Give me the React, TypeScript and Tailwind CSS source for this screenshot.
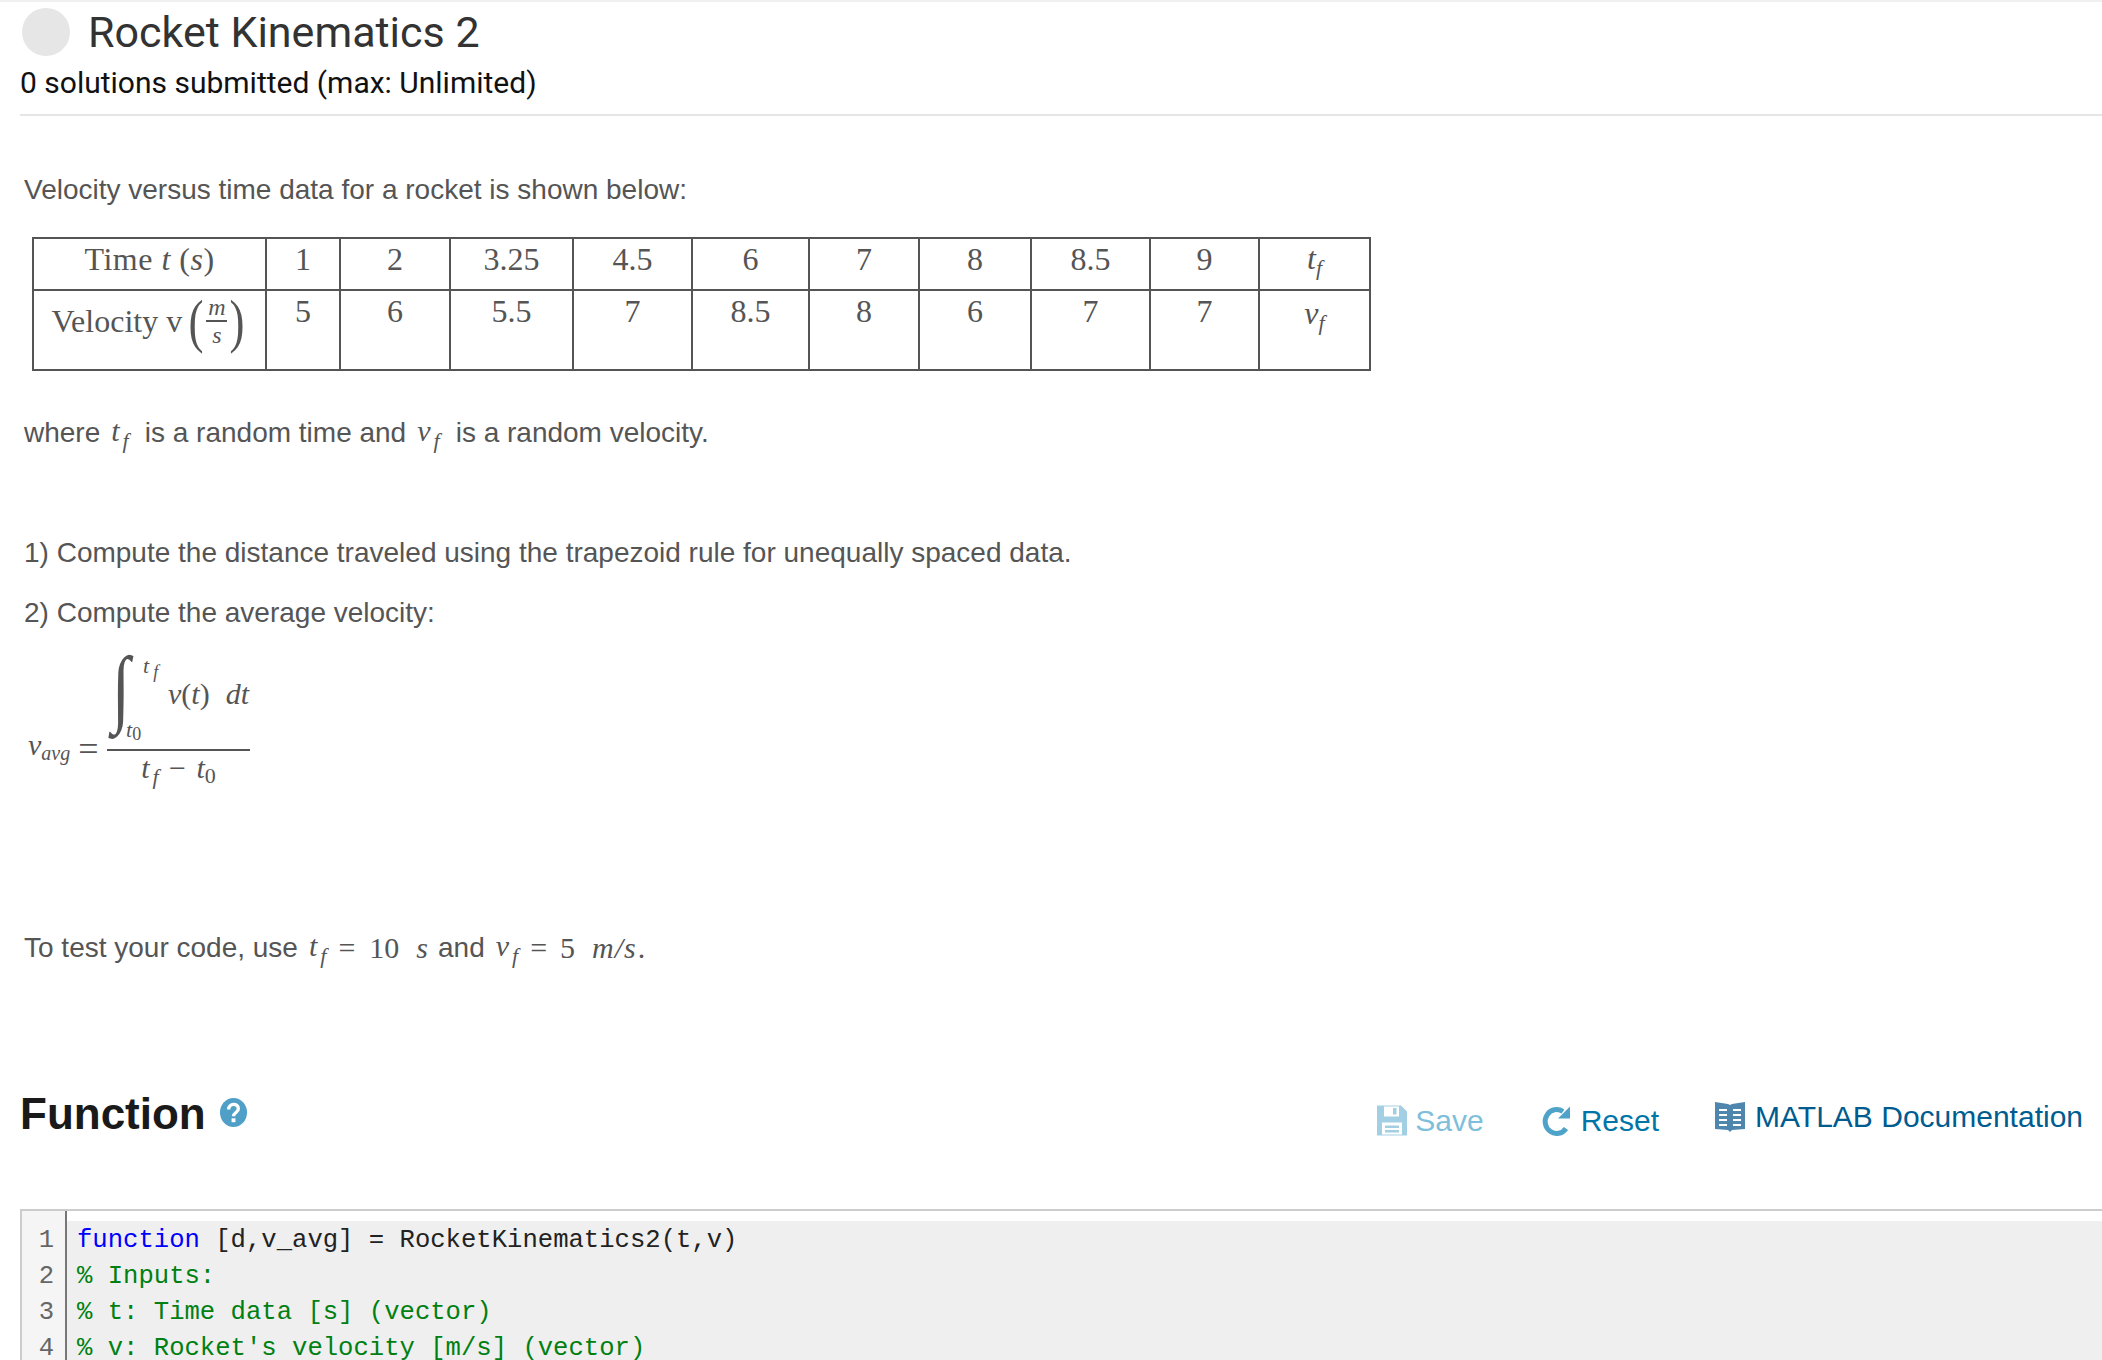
import React from "react";

const sans = "font-['Liberation_Sans',Arial,sans-serif]";
const serif = "font-['Liberation_Serif','Times_New_Roman',serif]";

const colWidths = [233, 74, 110, 123, 119, 117, 110, 112, 119, 109, 111];
const topRow = ["1", "2", "3.25", "4.5", "6", "7", "8", "8.5", "9"];
const bottomRow = ["5", "6", "5.5", "7", "8.5", "8", "6", "7", "7"];

const codeLines = [
  { text: "", fn: true },
  { text: "% Inputs:" },
  { text: "% t: Time data [s] (vector)" },
  { text: "% v: Rocket's velocity [m/s] (vector)" },
];

const Sub = ({ base }: { base: string }) => (
  <span className={`${serif} italic text-[30px] text-[#555] ml-[11px] mr-[16px] whitespace-nowrap`}>
    {base}
    <span className="text-[22px] relative top-[7px] ml-[3px]">f</span>
  </span>
);

const SaveIcon = () => (
  <svg viewBox="0 0 30 30" className="w-[30px] h-[31px]">
    <path
      fill="#a3cfe4"
      fillRule="evenodd"
      d="M0 0h24l6 6v24H0zM7 1v10h15V1zM16 2.500h3.500v6.500H16zM5 17v12h20V17zM8 20h14v2.500H8zM8 24.500h14V27H8z"
    />
  </svg>
);

const ResetIcon = () => (
  <svg viewBox="0 0 30 30" className="w-[30px] h-[33px]">
    <path d="M25 23A11.500 12 0 1 1 22 6" fill="none" stroke="#4fa3c9" strokeWidth="5" />
    <path d="M29 1v12H17z" fill="#4fa3c9" />
  </svg>
);

const BookIcon = () => (
  <svg viewBox="0 0 30 30" className="w-[30px] h-[30px]">
    <path fill="#4f86ae" d="M0 0l13 2 2 1 2-1 13-2v27l-13 1-2 2-2-2-13-1z" />
    <path
      stroke="#fff"
      strokeWidth="2"
      d="M4 8h8M4 13h8M4 18h8M4 23h8M18 8h8M18 13h8M18 18h8M18 23h8"
    />
  </svg>
);

const HelpIcon = () => (
  <svg viewBox="0 0 28 30" className="w-[29px] h-[29px]">
    <ellipse cx="14" cy="15" rx="14" ry="15" fill="#4f9fc7" />
    <path d="M9 12c0-7 10-7 10-1 0 4-5 4-5 8" fill="none" stroke="#fff" strokeWidth="3.500" />
    <rect x="12" y="21" width="4" height="4" fill="#fff" />
  </svg>
);

const Formula = () => (
  <div className={`${serif} mt-[17px] ml-[4px] h-[131px] flex items-end text-[#555] text-[30px]`}>
    <div className="italic mb-[13px] whitespace-nowrap w-[79px] shrink-0">
      v<span className="text-[20px] relative top-[5px]">avg</span>
      <span className="not-italic text-[36px] ml-2 leading-none relative top-[6px]">=</span>
    </div>
    <div className="w-[143px] flex flex-col">
      <div className="h-[103px] border-b-2 border-[#555] flex relative">
        <span className="text-[66px] font-light leading-none italic absolute left-[5px] top-[6px] scale-y-[1.3]">∫</span>
        <span className="italic text-[22px] absolute left-[36px] top-0">t<span className="text-[18px] relative top-[5px] ml-1">f</span></span>
        <span className="italic text-[22px] absolute left-[19px] top-[64px]">t<span className="not-italic text-[18px] relative top-[3px]">0</span></span>
        <span className="absolute left-[61px] top-[28px] whitespace-nowrap">
          <i>v</i>(<i>t</i>)<i className="ml-4">dt</i>
        </span>
      </div>
      <div className="h-[28px] text-center whitespace-nowrap leading-[33px]">
        <i>t</i><i className="text-[22px] relative top-[6px] ml-[3px]">f</i> <span className="mx-[3px]">−</span> <i>t</i><span className="text-[22px] relative top-[5px]">0</span>
      </div>
    </div>
  </div>
);

const App = () => {
  return (
    <div className={`${sans} w-[2102px] h-[1360px] overflow-hidden bg-white border-t-2 border-[#f0f0f0]`}>
      {/* header */}
      <div className="pl-5">
        <div className="flex items-center h-[60px]">
          <div className="w-12 h-12 rounded-full bg-[#e6e6e6] shrink-0 ml-[2px]" />
          <h1 className="font-['Roboto',sans-serif] text-[43px] text-[#333] ml-[18px]">Rocket Kinematics 2</h1>
        </div>
        <p className="font-['Roboto',sans-serif] text-[30px] leading-[36px] text-[#111] h-[51px] mt-[3px] border-b-2 border-[#e6e6e6]">
          0 solutions submitted (max: Unlimited)
        </p>
      </div>

      {/* statement */}
      <div className="px-6 text-[28px] text-[#555] leading-[36px]">
        <p className="mt-[56px]">Velocity versus time data for a rocket is shown below:</p>

        <table className={`${serif} mt-[29px] ml-2 table-fixed border-collapse border-2 border-[#555] text-[32px]`}>
          <colgroup>
            {colWidths.map((w, i) => (
              <col key={i} style={{ width: w }} />
            ))}
          </colgroup>
          <tbody>
            <tr className="h-[52px]">
              <td className="border-2 border-[#555] text-center pb-[10px] tracking-[0.5px]">
                Time <i>t</i> (<i>s</i>)
              </td>
              {topRow.map((v, i) => (
                <td key={i} className="border-2 border-[#555] text-center pb-[10px]">{v}</td>
              ))}
              <td className="border-2 border-[#555] text-center italic pb-[8px]">
                t<span className="text-[22px] relative top-[6px]">f</span>
              </td>
            </tr>
            <tr className="h-[80px]">
              <td className="border-2 border-[#555] text-center align-top pt-0 whitespace-nowrap">
                <span className="inline-flex items-center justify-center">
                  Velocity v
                  <span className="text-[60px] font-light leading-none ml-1 scale-x-75">(</span>
                  <span className="inline-flex flex-col items-center text-[24px] leading-[26px] italic">
                    <span className="border-b-2 border-[#555] px-0.5">m</span>
                    <span>s</span>
                  </span>
                  <span className="text-[60px] font-light leading-none scale-x-75">)</span>
                </span>
              </td>
              {bottomRow.map((v, i) => (
                <td key={i} className="border-2 border-[#555] text-center align-top pt-[2px]">{v}</td>
              ))}
              <td className="border-2 border-[#555] text-center align-top pt-1 italic">
                v<span className="text-[22px] relative top-[6px]">f</span>
              </td>
            </tr>
          </tbody>
        </table>

        <p className="mt-[42px] flex items-center">
          where <Sub base="t" /> is a random time and <Sub base="v" /> is a random velocity.
        </p>
        <p className="mt-[83px]">1) Compute the distance traveled using the trapezoid rule for unequally spaced data.</p>
        <p className="mt-[24px]">2) Compute the average velocity:</p>
        <Formula />
        <p className="mt-[149px] flex items-center">
          To test your code, use <Sub base="t" />
          <span className={`${serif} text-[30px] -ml-[4px]`}>=</span>
          <span className={`${serif} text-[30px] ml-[14px]`}>10</span>
          <i className={`${serif} text-[30px] ml-[17px] mr-[10px]`}>s</i>
          and <Sub base="v" />
          <span className={`${serif} text-[30px] -ml-[4px]`}>=</span>
          <span className={`${serif} text-[30px] ml-[13px]`}>5</span>
          <i className={`${serif} text-[30px] ml-[17px] tracking-[1px]`}>m/s</i>
          <span className={`${serif} text-[30px] ml-[1px]`}>.</span>
        </p>
      </div>

      {/* function toolbar */}
      <div className="mt-[123px] h-[60px] flex items-start justify-between pl-5 pr-5">
        <div className="flex items-center h-[48px]">
          <h2 className="text-[44px] font-bold text-[#1a1a1a]">Function</h2>
          <span className="ml-[13px] -mt-1"><HelpIcon /></span>
        </div>
        <div className="flex items-start text-[30px]">
          <a className="flex items-center gap-2 mt-[8px] text-[#7fbfdb]">
            <SaveIcon />
            Save
          </a>
          <a className="flex items-center gap-2.5 mt-[8px] ml-[57px] text-[#0076a8]">
            <ResetIcon />
            Reset
          </a>
          <a className="flex items-center gap-2.5 mt-[4px] ml-[56px] mr-[-1px] text-[#005c8f]">
            <BookIcon />
            MATLAB Documentation
          </a>
        </div>
      </div>

      {/* code */}
      <div className="mt-[59px] ml-5 border-t-2 border-l-2 border-[#ccc] font-['Liberation_Mono',monospace] text-[25.6px] leading-[36px]">
        <div className="flex">
          <div className="w-[32px] shrink-0 bg-[#f5f5f5] border-r-2 border-[#777] pt-[12px] pr-[11px] text-right text-[#666] box-content">
            {codeLines.map((_, i) => (
              <div key={i}>{i + 1}</div>
            ))}
          </div>
          <div className="flex-1 mt-[10px] bg-[#efefef] pl-[10px] pt-[2px] h-[200px]">
            {codeLines.map((l, i) =>
              l.fn ? (
                <div key={i} className="text-[#222]">
                  <span className="text-[#0000ff]">function</span> [d,v_avg] = RocketKinematics2(t,v)
                </div>
              ) : (
                <div key={i} className="text-[#008013]">{l.text}</div>
              ),
            )}
          </div>
        </div>
      </div>
    </div>
  );
};

export default App;
